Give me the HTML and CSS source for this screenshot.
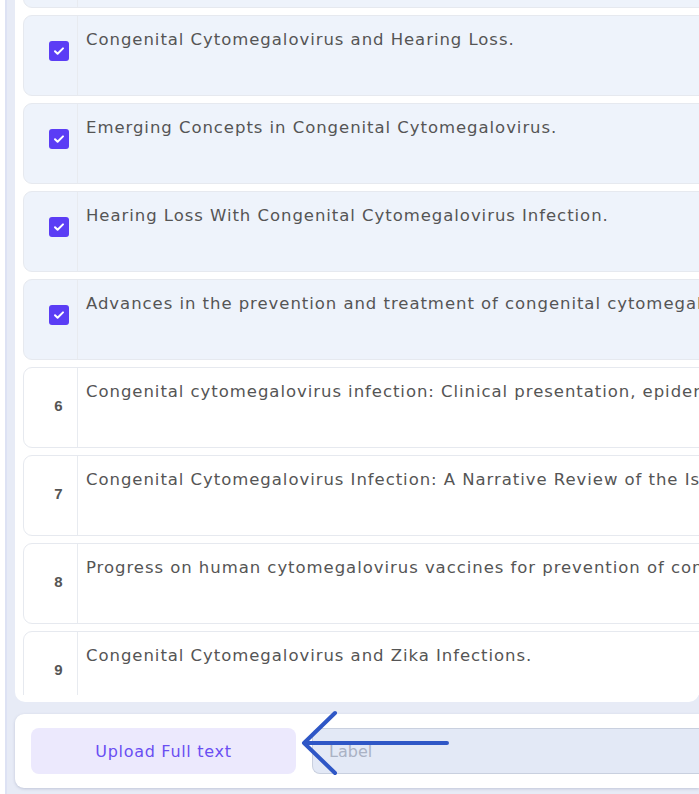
FILE: index.html
```html
<!DOCTYPE html>
<html lang="en">
<head>
<meta charset="utf-8">
<title>Articles</title>
<link rel="stylesheet" href="styles.css">
</head>
<body>
<div class="shell">
  <div class="panel">
    <div class="scroller">
      <div class="list">
        <div class="row selected">
          <div class="cell-left"><span class="checkbox"><svg viewBox="0 0 20 20" width="20" height="20"><path d="M6 10.2l2.6 2.6L14 7.4" fill="none" stroke="#fff" stroke-width="2" stroke-linecap="round" stroke-linejoin="round"/></svg></span></div>
          <div class="cell-title">Cytomegalovirus Infection in Pregnancy.</div>
        </div>
        <div class="row selected">
          <div class="cell-left"><span class="checkbox"><svg viewBox="0 0 20 20" width="20" height="20"><path d="M6 10.2l2.6 2.6L14 7.4" fill="none" stroke="#fff" stroke-width="2" stroke-linecap="round" stroke-linejoin="round"/></svg></span></div>
          <div class="cell-title">Congenital Cytomegalovirus and Hearing Loss.</div>
        </div>
        <div class="row selected">
          <div class="cell-left"><span class="checkbox"><svg viewBox="0 0 20 20" width="20" height="20"><path d="M6 10.2l2.6 2.6L14 7.4" fill="none" stroke="#fff" stroke-width="2" stroke-linecap="round" stroke-linejoin="round"/></svg></span></div>
          <div class="cell-title">Emerging Concepts in Congenital Cytomegalovirus.</div>
        </div>
        <div class="row selected">
          <div class="cell-left"><span class="checkbox"><svg viewBox="0 0 20 20" width="20" height="20"><path d="M6 10.2l2.6 2.6L14 7.4" fill="none" stroke="#fff" stroke-width="2" stroke-linecap="round" stroke-linejoin="round"/></svg></span></div>
          <div class="cell-title">Hearing Loss With Congenital Cytomegalovirus Infection.</div>
        </div>
        <div class="row selected">
          <div class="cell-left"><span class="checkbox"><svg viewBox="0 0 20 20" width="20" height="20"><path d="M6 10.2l2.6 2.6L14 7.4" fill="none" stroke="#fff" stroke-width="2" stroke-linecap="round" stroke-linejoin="round"/></svg></span></div>
          <div class="cell-title">Advances in the prevention and treatment of congenital cytomegalovirus infection.</div>
        </div>
        <div class="row">
          <div class="cell-left"><span class="num">6</span></div>
          <div class="cell-title">Congenital cytomegalovirus infection: Clinical presentation, epidemiology and treatment.</div>
        </div>
        <div class="row">
          <div class="cell-left"><span class="num">7</span></div>
          <div class="cell-title">Congenital Cytomegalovirus Infection: A Narrative Review of the Issues in Screening.</div>
        </div>
        <div class="row">
          <div class="cell-left"><span class="num">8</span></div>
          <div class="cell-title">Progress on human cytomegalovirus vaccines for prevention of congenital infection.</div>
        </div>
        <div class="row">
          <div class="cell-left"><span class="num">9</span></div>
          <div class="cell-title">Congenital Cytomegalovirus and Zika Infections.</div>
        </div>
      </div>
    </div>
  </div>
  <div class="footer">
    <button class="upload-btn" type="button">Upload Full text</button>
    <input class="label-input" type="text" placeholder="Label">
  </div>
</div>
<svg class="annot-arrow" width="699" height="794" viewBox="0 0 699 794">
  <path d="M335 713 L304 743 L335 773 M304 743 L447 743" fill="none" stroke="#2f57c6" stroke-width="4" stroke-linecap="round" stroke-linejoin="round"/>
</svg>
</body>
</html>
```
FILE: styles.css
```css
html, body {
  margin: 0;
  padding: 0;
  background: #ffffff;
  overflow: hidden;
}
body {
  width: 699px;
  height: 794px;
  position: relative;
  font-family: "DejaVu Sans", "Open Sans", sans-serif;
}
.shell {
  margin-left: 5px;
  border-left: 2px solid #dde2f4;
  background: #e7ebf6;
  padding-left: 8px;
  height: 794px;
  box-sizing: border-box;
  display: flex;
  flex-direction: column;
}
.panel {
  background: #ffffff;
  height: 702px;
  border-radius: 0 0 10px 10px;
  padding: 0 0 7px 8px;
  box-sizing: border-box;
  flex: none;
}
.scroller {
  height: 695px;
  overflow: hidden;
}
.list {
  margin-top: -73px;
  display: flex;
  flex-direction: column;
  gap: 7px;
  width: 760px;
}
.row {
  height: 81px;
  box-sizing: border-box;
  border: 1px solid #e6e9ef;
  border-radius: 9px;
  background: #ffffff;
  display: flex;
  flex: none;
}
.row.selected {
  background: #eef3fb;
}
.cell-left {
  width: 54px;
  flex: none;
  border-right: 1px solid #e8ebf0;
  display: flex;
  align-items: center;
  justify-content: center;
  padding-left: 16px;
  box-sizing: border-box;
}
.checkbox {
  width: 20px;
  height: 20px;
  border-radius: 3px;
  background: #5b3df5;
  display: block;
  margin-top: -10px;
}
.checkbox svg {
  display: block;
}
.num {
  font-family: "Liberation Sans", Arial, sans-serif;
  font-weight: bold;
  font-size: 15px;
  color: #555555;
  margin-top: -4px;
}
.cell-title {
  padding: 12px 8px 0 8px;
  font-size: 16.5px;
  line-height: 24px;
  letter-spacing: 0.95px;
  color: #555555;
  white-space: nowrap;
}
.footer {
  margin-top: 12px;
  height: 74px;
  background: #ffffff;
  border-radius: 9px 0 0 9px;
  box-shadow: 0 1px 3px rgba(120, 130, 160, 0.35);
  display: flex;
  align-items: center;
  gap: 16px;
  padding: 0 0 0 16px;
  flex: none;
}
.upload-btn {
  width: 265px;
  height: 46px;
  border: none;
  border-radius: 8px;
  background: #ece9fd;
  color: #6a4ef2;
  font-family: "DejaVu Sans", "Open Sans", sans-serif;
  font-size: 16px;
  letter-spacing: 0.7px;
  cursor: pointer;
}
.label-input {
  flex: 1;
  height: 46px;
  box-sizing: border-box;
  border: 1px solid #c9d0df;
  border-right: none;
  border-radius: 8px 0 0 8px;
  background: #e3e9f6;
  padding: 0 16px;
  font-family: "DejaVu Sans", "Open Sans", sans-serif;
  font-size: 16px;
  color: #444;
}
.label-input::placeholder {
  color: #aab2c4;
}
.annot-arrow {
  position: absolute;
  left: 0;
  top: 0;
  pointer-events: none;
}
```
